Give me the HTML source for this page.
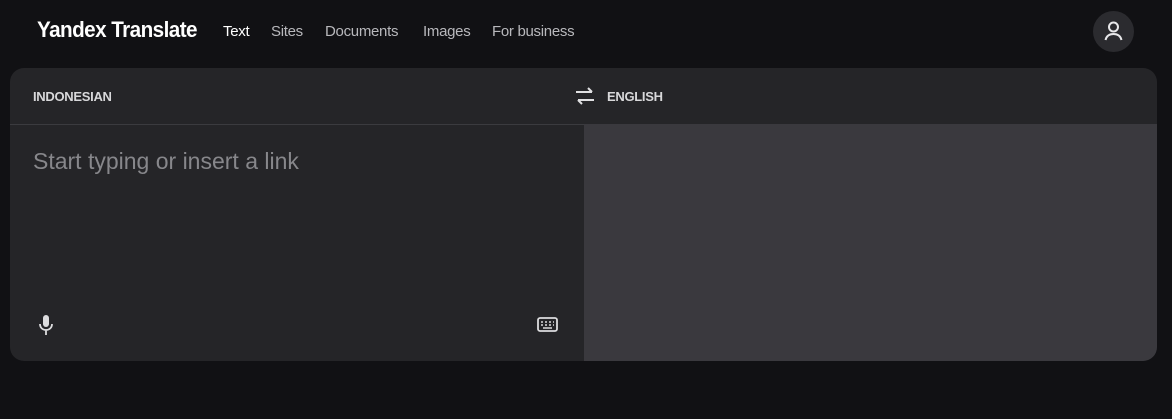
<!DOCTYPE html>
<html><head><style>
body{margin:0;width:1172px;height:419px;background:#111114;font-family:"Liberation Sans",sans-serif;position:relative;overflow:hidden}
.logo{position:absolute;left:37px;top:17px;color:#fff;font-size:22px;font-weight:bold;letter-spacing:-0.6px;transform:scaleX(0.94);transform-origin:left}
.nav{position:absolute;top:23px;font-size:15px;color:#b8b8bc;letter-spacing:-0.3px}
.card{position:absolute;left:10px;top:68px;width:1147px;height:293px;background:#252528;border-radius:14px;overflow:hidden}
.right{position:absolute;left:574px;top:56px;right:0;bottom:0;background:#3a393e}
.div{position:absolute;left:0;top:56px;width:574px;height:1px;background:#3b3b3f}
.lab{position:absolute;top:21px;font-size:13px;font-weight:bold;color:#d8d8da;letter-spacing:-0.3px}
.ph{position:absolute;left:23px;top:80px;font-size:23px;color:#87878b;letter-spacing:0}
.av{position:absolute;left:1093px;top:11px;width:41px;height:41px;border-radius:50%;background:#2b2b2f}
</style></head><body>
<div class="logo">Yandex Translate</div>
<div class="nav" style="left:223px;color:#fff">Text</div>
<div class="nav" style="left:271px">Sites</div>
<div class="nav" style="left:325px">Documents</div>
<div class="nav" style="left:423px">Images</div>
<div class="nav" style="left:492px">For business</div>
<div class="av"><svg width="41" height="41" viewBox="0 0 41 41" fill="none" stroke="#e8e8ea" stroke-width="2"><circle cx="20.5" cy="16" r="4.5"/><path d="M12.5 29c1-4 4-6 8-6s7 2 8 6"/></svg></div>
<div class="card">
<div class="lab" style="left:23px">INDONESIAN</div>
<svg style="position:absolute;left:565px;top:19px" width="20" height="18" viewBox="0 0 20 18" fill="none" stroke="#e0e0e2" stroke-width="2"><path d="M1 5h16M13 1l4 4M19 13H3M3 13l4 4"/></svg>
<div class="lab" style="left:597px">ENGLISH</div>
<div class="div"></div>
<div class="right"></div>
<div class="ph">Start typing or insert a link</div>
<svg style="position:absolute;left:28px;top:246px" width="16" height="22" viewBox="0 0 16 22"><rect x="5" y="1" width="6" height="12" rx="3" fill="#dcdcde"/><path d="M2 10c0 4 3 6 6 6s6-2 6-6M8 16v5" stroke="#dcdcde" stroke-width="1.8" fill="none"/></svg>
<svg style="position:absolute;left:527px;top:249px" width="21" height="15" viewBox="0 0 21 15" fill="none"><rect x="1" y="1" width="19" height="13" rx="2" stroke="#dcdcde" stroke-width="1.8"/><path d="M4 5h2M8 5h2M12 5h2M16 5h1M4 8h2M8 8h2M12 8h2M16 8h1M6 11h9" stroke="#dcdcde" stroke-width="1.6"/></svg>
</div>
</body></html>
